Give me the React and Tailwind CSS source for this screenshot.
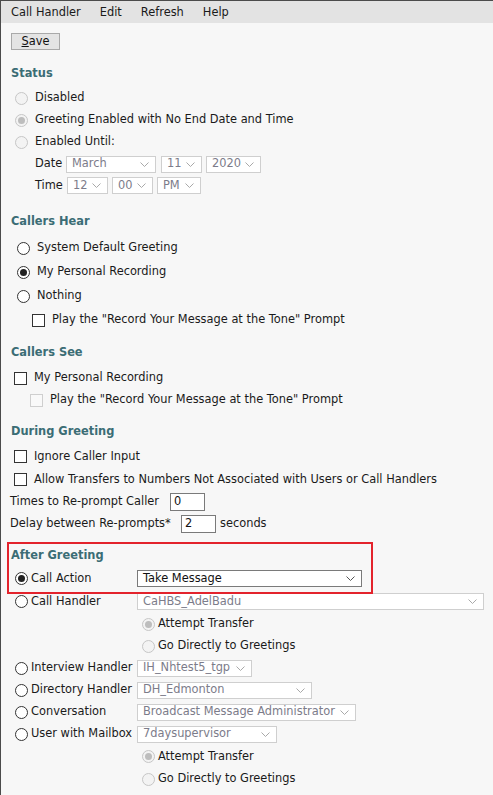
import React from "react";

const FONT = { fontFamily: '"DejaVu Sans", Verdana, sans-serif' };

function Chevron({ dark }) {
  return (
    <svg width="9" height="5" viewBox="0 0 9 5" className="shrink-0">
      <polyline
        points="0.5,0.5 4.5,4.5 8.5,0.5"
        fill="none"
        stroke={dark ? "#555" : "#a9a9a9"}
        strokeWidth="1"
      />
    </svg>
  );
}

function Select({ value, width, disabled = true, dark = false, className = "" }) {
  return (
    <div
      className={`flex h-[17px] items-center justify-between gap-[3px] bg-white pl-[5px] pr-[6px] border ${
        dark ? "border-[#7a7a7a] text-[#111]" : "border-[#cfcfcf] text-[#7c7c8a]"
      } ${className}`}
      style={{ width }}
    >
      <span className="whitespace-nowrap leading-none">{value}</span>
      <Chevron dark={dark && !disabled} />
    </div>
  );
}

function Radio({ checked, disabled }) {
  if (disabled) {
    return (
      <span className="flex h-[13px] w-[13px] shrink-0 items-center justify-center rounded-full border border-[#c6c6c6] bg-[#f3f3f3]">
        {checked && <span className="h-[7px] w-[7px] rounded-full bg-[#bdbdbd]" />}
      </span>
    );
  }
  return (
    <span className="flex h-[13px] w-[13px] shrink-0 items-center justify-center rounded-full border border-[#333] bg-white">
      {checked && <span className="h-[7px] w-[7px] rounded-full bg-[#222]" />}
    </span>
  );
}

function Checkbox({ disabled }) {
  return (
    <span
      className={`h-[13px] w-[13px] shrink-0 border ${
        disabled ? "border-[#cfcfcf] bg-[#f9f9f9]" : "border-[#333] bg-white"
      }`}
    />
  );
}

function Heading({ children, className = "" }) {
  return (
    <div className={`flex h-[20px] items-center font-bold text-[#3b6d75] ${className}`}>
      {children}
    </div>
  );
}

function Row({ children, className = "", h = "h-[22px]" }) {
  return <div className={`flex items-center ${h} ${className}`}>{children}</div>;
}

function TextBox({ value, width }) {
  return (
    <div
      className="flex h-[18px] items-center border border-[#7a7a7a] bg-white pl-[3px] text-[#111]"
      style={{ width }}
    >
      {value}
    </div>
  );
}

function ActionRow({ label, select, radio, h = "h-[22px]" }) {
  return (
    <Row h={h}>
      <span className="ml-[4px]">
        <Radio checked={radio} />
      </span>
      <span className="ml-[3px] w-[106px]">{label}</span>
      {select}
    </Row>
  );
}

function SubRadios({ first = "h-[22px]" }) {
  return (
    <>
      <Row h={first} className="pl-[131px]">
        <Radio checked disabled />
        <span className="ml-[3px]">Attempt Transfer</span>
      </Row>
      <Row className="pl-[131px]">
        <Radio disabled />
        <span className="ml-[3px]">Go Directly to Greetings</span>
      </Row>
    </>
  );
}

export default function App() {
  return (
    <div
      className="min-h-[795px] w-[493px] border-l border-t border-[#4b4b4b] bg-[#f7f7f7] text-[11.4px] text-[#1a1a1a]"
      style={FONT}
    >
      {/* Menu bar */}
      <div className="flex h-[22px] items-center bg-[#e3e3e3] pl-[10px] pt-[1px]">
        <span>Call Handler</span>
        <span className="ml-[19px]">Edit</span>
        <span className="ml-[19px]">Refresh</span>
        <span className="ml-[19px]">Help</span>
      </div>

      <div className="relative pl-[10px]">
        <button className="mt-[10px] flex h-[17px] w-[49px] items-center justify-center border border-[#a9a9a9] bg-[#e4e4e4] text-[#111]">
          <span>
            <span className="underline">S</span>ave
          </span>
        </button>

        {/* Status */}
        <Heading className="mt-[14px]">Status</Heading>
        <div className="mt-[3px] pl-[4px]">
          <Row>
            <Radio disabled />
            <span className="ml-[7px]">Disabled</span>
          </Row>
          <Row>
            <Radio checked disabled />
            <span className="ml-[7px]">Greeting Enabled with No End Date and Time</span>
          </Row>
          <Row>
            <Radio disabled />
            <span className="ml-[7px]">Enabled Until:</span>
          </Row>
          <Row className="pl-[20px]">
            <span className="w-[31px]">Date</span>
            <Select value="March" width={90} />
            <Select value="11" width={41} className="ml-[5px]" />
            <Select value="2020" width={55} className="ml-[4px]" />
          </Row>
          <Row h="h-[21px]" className="pl-[20px]">
            <span className="w-[32px]">Time</span>
            <Select value="12" width={41} />
            <Select value="00" width={41} className="ml-[4px]" />
            <Select value="PM" width={44} className="ml-[4px]" />
          </Row>
        </div>

        {/* Callers Hear */}
        <Heading className="mt-[16px]">Callers Hear</Heading>
        <div className="mt-[4px] pl-[6px]">
          <Row h="h-[24px]">
            <Radio />
            <span className="ml-[7px]">System Default Greeting</span>
          </Row>
          <Row h="h-[24px]">
            <Radio checked />
            <span className="ml-[7px]">My Personal Recording</span>
          </Row>
          <Row h="h-[24px]">
            <Radio />
            <span className="ml-[7px]">Nothing</span>
          </Row>
          <Row h="h-[24px]" className="pl-[15px]">
            <Checkbox />
            <span className="ml-[7px]">Play the "Record Your Message at the Tone" Prompt</span>
          </Row>
        </div>

        {/* Callers See */}
        <Heading className="mt-[11px]">Callers See</Heading>
        <div className="mt-[4px] pl-[3px]">
          <Row>
            <Checkbox />
            <span className="ml-[7px]">My Personal Recording</span>
          </Row>
          <Row className="pl-[16px]">
            <Checkbox disabled />
            <span className="ml-[7px]">Play the "Record Your Message at the Tone" Prompt</span>
          </Row>
        </div>

        {/* During Greeting */}
        <Heading className="mt-[11px]">During Greeting</Heading>
        <div className="mt-[3px]">
          <Row h="h-[23px]" className="pl-[3px]">
            <Checkbox />
            <span className="ml-[7px]">Ignore Caller Input</span>
          </Row>
          <Row h="h-[23px]" className="pl-[3px]">
            <Checkbox />
            <span className="ml-[7px]">Allow Transfers to Numbers Not Associated with Users or Call Handlers</span>
          </Row>
          <Row h="h-[21px]" className="-ml-[1px]">
            <span className="w-[160px]">Times to Re-prompt Caller</span>
            <TextBox value="0" width={35} />
          </Row>
          <Row h="h-[23px]" className="-ml-[1px]">
            <span className="w-[171px]">Delay between Re-prompts*</span>
            <TextBox value="2" width={35} />
            <span className="ml-[4px]">seconds</span>
          </Row>
        </div>

        {/* After Greeting */}
        <Heading className="mt-[11px]">After Greeting</Heading>
        <div className="mt-[1px]">
          <ActionRow
            label="Call Action"
            radio
            h="h-[23px]"
            select={<Select value="Take Message" width={225} dark disabled={false} />}
          />
          <ActionRow
            label="Call Handler"
            h="h-[23px]"
            select={<Select value="CaHBS_AdelBadu" width={347} />}
          />
          <SubRadios />
          <ActionRow label="Interview Handler" select={<Select value="IH_Nhtest5_tgp" width={115} />} />
          <ActionRow label="Directory Handler" select={<Select value="DH_Edmonton" width={175} />} />
          <ActionRow
            label="Conversation"
            select={<Select value="Broadcast Message Administrator" width={219} />}
          />
          <ActionRow label="User with Mailbox" select={<Select value="7daysupervisor" width={140} />} />
          <SubRadios first="h-[23px]" />
        </div>

        {/* highlight annotation */}
        <div className="pointer-events-none absolute left-[6px] top-[509px] h-[52px] w-[366px] border-2 border-[#e3232c]" />
      </div>
    </div>
  );
}
